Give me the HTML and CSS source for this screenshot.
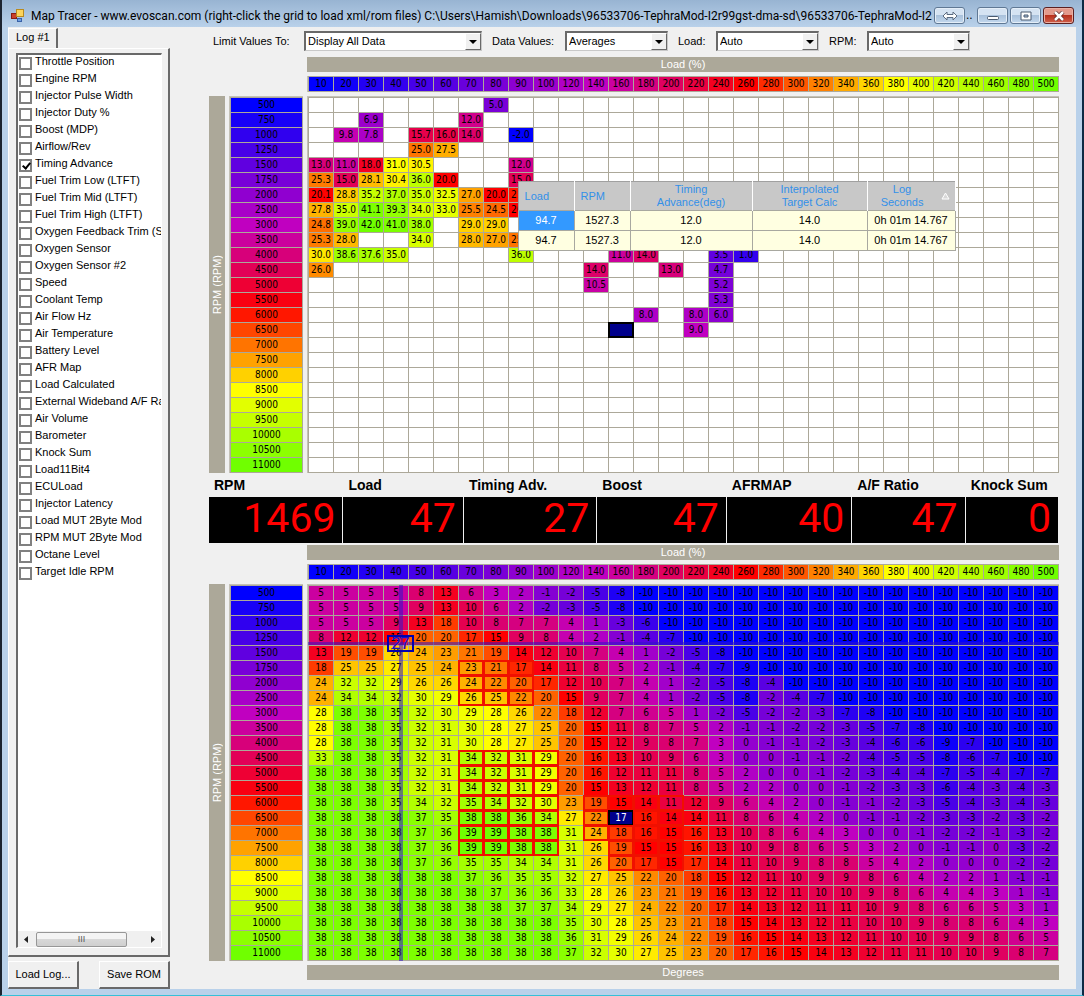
FILE: index.html
```html
<!DOCTYPE html>
<html lang="en">

<head>
    <meta charset="UTF-8">
    <meta name="viewport" content="width=device-width, initial-scale=1.0">
    <title>Map Tracer</title>
    <link rel="stylesheet" href="styles.css">
</head>

<body>
    <header class="titlebar">
        <svg class="app-icon" width="14" height="13" viewBox="0 0 14 13">
            <rect x="0.5" y="4.5" width="5" height="5" fill="#c8402c" stroke="#8a1c14"/>
            <rect x="5.5" y="0.5" width="7" height="7" fill="#fbd45c" stroke="#b98a1e"/>
            <rect x="6.5" y="9.5" width="4" height="3" fill="#6fa0e0" stroke="#3a62a8"/>
        </svg>
        <h1>Map Tracer - www.evoscan.com (right-click the grid to load xml/rom files) C:\Users\Hamish\Downloads\96533706-TephraMod-I2r99gst-dma-sd\96533706-TephraMod-I2r9</h1>
        <button class="win-btn" aria-label="Move">
            <svg width="16" height="10" viewBox="0 0 16 10"><path d="M1 5 L5 1 V3.500 H11 V1 L15 5 L11 9 V6.500 H5 V9 Z" fill="#fff" stroke="#5b6b80"/></svg>
        </button>
        <span class="dots">..</span>
        <button class="win-btn" aria-label="Minimize">
            <svg width="12" height="10" viewBox="0 0 12 10"><rect x="0.5" y="5.500" width="11" height="3" rx="1" fill="#fff" stroke="#4b5b70"/></svg>
        </button>
        <button class="win-btn" aria-label="Maximize">
            <svg width="12" height="10" viewBox="0 0 12 10"><path d="M1 1 H11 V9 H1 Z M4 4 V6 H8 V4 Z" fill="#fff" fill-rule="evenodd" stroke="#4b5b70"/></svg>
        </button>
        <button class="win-btn close" aria-label="Close">
            <svg width="12" height="10" viewBox="0 0 12 10"><path d="M2 1 L10 9 M10 1 L2 9" stroke="#5a2a2a" stroke-width="4"/><path d="M2 1 L10 9 M10 1 L2 9" stroke="#fff" stroke-width="2.500"/></svg>
        </button>
    </header>

    <div class="client">
        <aside class="sidebar">
            <div class="tab">Log #1</div>
            <div class="tab-page">
                <div class="listbox">
                    <ul id="channels"></ul>
                    <div class="scrollbar">
                        <svg width="5" height="7" viewBox="0 0 5 7"><path d="M4 0 V7 L0 3.500 Z" fill="#222"/></svg>
                        <div class="track"><div class="thumb">III</div></div>
                        <svg width="5" height="7" viewBox="0 0 5 7"><path d="M1 0 V7 L5 3.500 Z" fill="#222"/></svg>
                    </div>
                </div>
            </div>
            <div class="side-buttons">
                <button class="push">Load Log...</button>
                <button class="push">Save ROM</button>
            </div>
        </aside>

        <main>
            <form class="toolbar">
                <label class="first" for="limit">Limit Values To:</label>
                <span class="combo wide"><select id="limit"><option>Display All Data</option></select><i></i></span>
                <label class="values" for="values">Data Values:</label>
                <span class="combo"><select id="values"><option>Averages</option></select><i></i></span>
                <label for="load">Load:</label>
                <span class="combo"><select id="load"><option>Auto</option></select><i></i></span>
                <label for="rpm">RPM:</label>
                <span class="combo"><select id="rpm"><option>Auto</option></select><i></i></span>
            </form>

            <section class="map">
                <div class="bar x-title">Load (%)</div>
                <table class="grid x-axis"></table>
                <div class="bar y-title"><span>RPM (RPM)</span></div>
                <table class="grid y-axis"></table>
                <div class="plot">
                    <table class="grid" id="logGrid"></table>
                    <table class="popup">
                        <thead>
                            <tr>
                                <th class="c-load left">Load</th>
                                <th class="c-rpm left">RPM</th>
                                <th class="c-timing">Timing<br>Advance(deg)</th>
                                <th class="c-target">Interpolated<br>Target Calc</th>
                                <th class="c-log"><span>Log<br>Seconds</span>
                                    <svg width="9" height="8" viewBox="0 0 9 8"><path d="M4.500 1 L8 7 H1 Z" fill="#d8d8d8" stroke="#fff"/></svg>
                                </th>
                            </tr>
                        </thead>
                        <tbody>
                            <tr><td class="active">94.7</td><td>1527.3</td><td>12.0</td><td>14.0</td><td>0h 01m 14.767</td></tr>
                            <tr><td>94.7</td><td>1527.3</td><td>12.0</td><td>14.0</td><td>0h 01m 14.767</td></tr>
                        </tbody>
                    </table>
                </div>
            </section>

            <dl class="gauges">
                <div><dt>RPM</dt><dd>1469</dd></div>
                <div><dt>Load</dt><dd>47</dd></div>
                <div><dt>Timing Adv.</dt><dd>27</dd></div>
                <div><dt>Boost</dt><dd>47</dd></div>
                <div><dt>AFRMAP</dt><dd>40</dd></div>
                <div><dt>A/F Ratio</dt><dd>47</dd></div>
                <div><dt>Knock Sum</dt><dd>0</dd></div>
            </dl>

            <section class="map">
                <div class="bar x-title">Load (%)</div>
                <table class="grid x-axis"></table>
                <div class="bar y-title"><span>RPM (RPM)</span></div>
                <table class="grid y-axis"></table>
                <div class="plot">
                    <table class="grid" id="romGrid"></table>
                    <div class="cross-v"></div>
                    <div class="cross-h"></div>
                    <div class="cross-tag">27</div>
                </div>
                <div class="bar x-title">Degrees</div>
            </section>
        </main>
    </div>

    <script src="script.js"></script>
</body>

</html>
```

FILE: styles.css
```css
:root {
    --face: #f0f0f0;
    --bar: #aca899;
    --frame: #b9d1ea;
    --ui: "Liberation Sans", Arial, sans-serif;
}

* {
    box-sizing: border-box;
}

body {
    margin: 0;
    min-height: 100vh;
    display: flex;
    flex-direction: column;
    background: var(--frame);
    border-left: 2px solid #1c2430;
    border-right: 2px solid #0c2a44;
    border-bottom: 1px solid #35c0d8;
    font: 11px/13px var(--ui);
    color: #000;
}

button,
select {
    font: inherit;
    color: inherit;
}

/* title bar */
.titlebar {
    display: flex;
    align-items: center;
    height: 27px;
    padding: 4px 8px 0 9px;
    background: linear-gradient(#98b4d2, #b9d1ea);
}

.app-icon {
    flex: none;
    margin-right: 6px;
}

.titlebar h1 {
    flex: 1;
    min-width: 0;
    margin: 0;
    overflow: hidden;
    white-space: nowrap;
    font: 12px/16px Roboto, "Noto Sans", sans-serif;
}

.win-btn {
    flex: none;
    display: flex;
    align-items: center;
    justify-content: center;
    width: 31px;
    height: 17px;
    margin-left: 2px;
    padding: 0;
    border: 1px solid #5f7894;
    border-radius: 3px;
    background: linear-gradient(#d5e3f2 0 48%, #a9c1db 50%, #c3d8ee);
    box-shadow: inset 0 0 0 1px #e4eef8;
}

.win-btn.close {
    border-color: #5c2020;
    background: linear-gradient(#e39a8c 0 48%, #b8301c 50%, #d0604c);
    box-shadow: inset 0 0 0 1px #eab0a4;
}

.dots {
    width: 10px;
    padding-left: 1px;
    font-size: 12px;
}

.client {
    flex: 1;
    display: flex;
    gap: 39px;
    margin: 0 6px 6px;
    padding: 1px 17px 0 0;
    background: var(--face);
}

/* left side */
.sidebar {
    flex: none;
    width: 162px;
    display: flex;
    flex-direction: column;
}

.tab {
    position: relative;
    z-index: 1;
    width: 50px;
    height: 20px;
    padding: 2px 0 0 7px;
    background: var(--face);
    border-top: 1px solid #fff;
    border-left: 1px solid #fff;
    border-right: 2px solid #696969;
    white-space: nowrap;
}

.tab-page {
    flex: 1;
    display: flex;
    padding: 4px 6px 7px 7px;
    border: 1px solid #fff;
    border-right: 2px solid #696969;
    border-bottom: 2px solid #696969;
}

.listbox {
    flex: 1;
    min-width: 0;
    display: flex;
    flex-direction: column;
    justify-content: space-between;
    background: #fff;
    border: 1px solid #fff;
    border-top: 2px solid #696969;
    border-left: 2px solid #696969;
}

.listbox ul {
    margin: 0;
    padding: 0;
    list-style: none;
    overflow: hidden;
}

.listbox label {
    display: flex;
    align-items: flex-start;
    height: 17px;
    padding-left: 1px;
    white-space: nowrap;
}

.listbox input {
    appearance: none;
    flex: none;
    position: relative;
    width: 13px;
    height: 13px;
    margin: 2px 3px 0 0;
    border: 2px solid #808080;
    background: #fff;
}

.listbox input:checked::after {
    content: "";
    position: absolute;
    left: 3px;
    top: 0;
    width: 3px;
    height: 6px;
    border: solid #000;
    border-width: 0 2px 2px 0;
    transform: rotate(40deg);
}

.scrollbar {
    display: flex;
    align-items: center;
    height: 16px;
    padding: 0 6px;
    background: var(--face);
}

.track {
    flex: 1;
    margin: 0 7px;
}

.thumb {
    width: 85%;
    height: 15px;
    border: 1px solid #979797;
    border-radius: 2px;
    background: linear-gradient(#f4f4f4 0 48%, #d8d8d8 50%, #cfcfcf);
    text-align: center;
    font-size: 9px;
    line-height: 12px;
    color: #555;
}

.side-buttons {
    display: flex;
    justify-content: space-between;
    margin-top: 4px;
}

.push {
    height: 28px;
    width: 71px;
    padding: 0;
    border: 1px solid #fff;
    border-right: 2px solid #696969;
    border-bottom: 2px solid #696969;
    background: var(--face);
    white-space: nowrap;
}

/* toolbar */
main {
    flex: 1;
    min-width: 0;
}

.toolbar {
    display: flex;
    align-items: center;
    gap: 10px;
    padding: 3px 0 6px 4px;
    white-space: nowrap;
}

.toolbar label {
    width: 28px;
}

.toolbar .first {
    width: 81px;
}

.toolbar .values {
    width: 63px;
}

.combo {
    position: relative;
    width: 103px;
    height: 20px;
}

.combo.wide {
    width: 178px;
}

.combo select {
    appearance: none;
    width: 100%;
    height: 20px;
    padding: 0 18px 0 2px;
    border: 2px solid #696969;
    border-right: 1px solid #c8c8c8;
    border-bottom: 1px solid #c8c8c8;
    border-radius: 0;
    background: #fff;
}

.combo i {
    position: absolute;
    top: 2px;
    right: 1px;
    width: 16px;
    height: 17px;
    background: var(--face);
    border: 1px solid #fff;
    border-right-color: #696969;
    border-bottom-color: #696969;
    pointer-events: none;
}

.combo i::after {
    content: "";
    position: absolute;
    left: 3px;
    top: 6px;
    border: 4px solid transparent;
    border-top-color: #000;
    border-bottom: 0;
}

/* maps */
.map {
    display: grid;
    grid-template-columns: 16px 74px minmax(0, 1fr);
    gap: 4px;
}

.bar {
    background: var(--bar);
    color: #fff;
    text-align: center;
}

.x-title {
    grid-column: 3;
    height: 15px;
    line-height: 15px;
}

.x-axis {
    grid-column: 3;
}

.y-title {
    display: flex;
    align-items: center;
    justify-content: center;
}

.y-title span {
    writing-mode: vertical-rl;
    transform: rotate(180deg);
}

.plot {
    position: relative;
}

.grid {
    width: 100%;
    table-layout: fixed;
    border-collapse: separate;
    border-spacing: 1px;
    border-left: 1px solid #c4c1b6;
    background: var(--bar);
    font: 10px/14px "DejaVu Sans Condensed", "DejaVu Sans", sans-serif;
    text-align: center;
}

.grid td,
.grid th {
    height: 14px;
    padding: 0;
    background: #fff;
    font-weight: normal;
    white-space: nowrap;
}

.plot .grid,
.y-axis {
    border-top: 1px solid #c4c1b6;
}

.grid .marked {
    outline: 2px solid #f01000;
    outline-offset: -1px;
}

.grid .selected {
    background: #00008b;
    color: #fff;
    outline: 2px solid #000;
    outline-offset: -1px;
}

/* log entries under the pointer */
.popup {
    position: absolute;
    left: 28%;
    top: 85px;
    width: 438px;
    table-layout: fixed;
    border-collapse: collapse;
    border: 1px solid #a0a0a0;
    background: #ffffe1;
    text-align: center;
}

.popup th {
    position: relative;
    height: 29px;
    padding: 0;
    background: #c8c8c8;
    border-right: 1px solid #fff;
    color: #3390e8;
    font-weight: normal;
}

.popup .left {
    padding-left: 6px;
    text-align: left;
}

.popup td {
    height: 20px;
    padding: 0;
    border: 1px solid #a8a8a0;
}

.popup .active {
    background: #3399ff;
    color: #fff;
}

.c-load,
.c-rpm {
    width: 56px;
}

.c-timing {
    width: 122px;
}

.c-target {
    width: 115px;
}

.c-log span {
    display: block;
    padding-right: 18px;
}

.c-log svg {
    position: absolute;
    right: 5px;
    top: 10px;
}

/* gauges */
.gauges {
    display: grid;
    grid-template-columns: 133fr 119fr 132fr 128fr 124fr 112fr 92fr;
    gap: 1px;
    margin: 0 1px 2px 0;
}

.gauges dt {
    height: 24px;
    padding: 5px 0 0 5px;
    font-size: 14px;
    font-weight: bold;
    line-height: 15px;
    white-space: nowrap;
}

.gauges dd {
    height: 46px;
    margin: 0;
    padding-right: 7px;
    background: #000;
    color: #f00;
    font: 41px/42px Roboto, "Liberation Sans", sans-serif;
    text-align: right;
}

/* live position on the rom map */
.cross-v,
.cross-h {
    position: absolute;
    background: rgba(50, 20, 200, 0.55);
}

.cross-v {
    left: 92px;
    top: 1px;
    bottom: 0;
    width: 4px;
}

.cross-h {
    left: 1px;
    right: 0;
    top: 58px;
    height: 3px;
}

.cross-tag {
    position: absolute;
    left: 80px;
    top: 51px;
    width: 27px;
    height: 17px;
    border: 2px solid #0000b0;
    color: #1010d0;
    font-size: 16px;
    line-height: 14px;
    text-align: center;
    text-shadow: 1px 0 #f04060;
}
```

FILE: script.js
```js
const channels = [
    'Throttle Position', 'Engine RPM', 'Injector Pulse Width', 'Injector Duty %', 'Boost (MDP)',
    'Airflow/Rev', 'Timing Advance', 'Fuel Trim Low (LTFT)', 'Fuel Trim Mid (LTFT)',
    'Fuel Trim High (LTFT)', 'Oxygen Feedback Trim (ST', 'Oxygen Sensor', 'Oxygen Sensor #2',
    'Speed', 'Coolant Temp', 'Air Flow Hz', 'Air Temperature', 'Battery Level', 'AFR Map',
    'Load Calculated', 'External Wideband A/F Ra', 'Air Volume', 'Barometer', 'Knock Sum',
    'Load11Bit4', 'ECULoad', 'Injector Latency', 'Load MUT 2Byte Mod', 'RPM MUT 2Byte Mod',
    'Octane Level', 'Target Idle RPM'
];

const loads = [10, 20, 30, 40, 50, 60, 70, 80, 90, 100];
for (let v = 120; v <= 500; v += 20) loads.push(v);

const rpms = [500, 750, 1000, 1250, 1500, 1750, 2000];
for (let v = 2500; v <= 11000; v += 500) rpms.push(v);

// logged averages: rpm -> { column: value }
const logData = {
    500: { 7: 5 },
    750: { 2: 6.9, 6: 12 },
    1000: { 1: 9.8, 2: 7.8, 4: 15.7, 5: 16, 6: 14, 8: -2 },
    1250: { 4: 25, 5: 27.5 },
    1500: { 0: 13, 1: 11, 2: 18, 3: 31, 4: 30.5, 8: 12 },
    1750: { 0: 25.3, 1: 15, 2: 28.1, 3: 30.4, 4: 36, 5: 20, 8: 15 },
    2000: { 0: 20.1, 1: 28.8, 2: 35.2, 3: 37, 4: 35, 5: 32.5, 6: 27, 7: 20, 8: 21 },
    2500: { 0: 27.8, 1: 35, 2: 41.1, 3: 39.3, 4: 34, 5: 33, 6: 25.5, 7: 24.5, 8: 20 },
    3000: { 0: 24.8, 1: 39, 2: 42, 3: 41, 4: 38, 6: 29, 7: 29 },
    3500: { 0: 25.3, 1: 28, 4: 34, 6: 28, 7: 27, 8: 25 },
    4000: { 0: 30, 1: 38.6, 2: 37.6, 3: 35, 8: 36, 12: 11, 13: 14, 16: 3.5, 17: 1 },
    4500: { 0: 26, 11: 14, 14: 13, 16: 4.7 },
    5000: { 11: 10.5, 16: 5.2 },
    5500: { 16: 5.3 },
    6000: { 13: 8, 15: 8, 16: 6 },
    6500: { 15: 9 }
};

// rom table, short rows are filled up with -10
const romData = `
5 5 5 5 8 13 6 3 2 -1 -2 -5 -8
5 5 5 5 9 13 10 6 2 -2 -3 -5 -8
5 5 5 9 13 18 10 8 7 7 4 1 -3 -6
8 12 12 15 20 20 17 15 9 8 4 2 -1 -4 -7
13 19 19 26 24 23 21 19 14 12 10 7 4 1 -2 -5 -8
18 25 25 27 25 24 23 21 17 14 11 8 5 2 -1 -4 -7 -9
24 32 32 29 26 26 24 22 20 17 12 10 7 4 1 -2 -5 -8 -4
24 34 34 32 30 29 26 25 22 20 15 9 7 4 1 -2 -5 -8 -2 -4 -7
28 38 38 35 32 30 29 28 26 22 18 12 7 6 5 1 -2 -5 -2 -2 -3 -7 -8
28 38 38 35 32 31 30 28 27 25 20 15 11 8 7 5 2 -1 -1 -2 -2 -3 -5 -7 -8
28 38 38 35 32 31 30 28 27 25 20 15 12 9 8 7 3 0 -1 -1 -2 -3 -4 -6 -6 -9 -7
33 38 38 35 32 31 34 32 31 29 20 16 13 10 9 6 3 0 0 -1 -1 -2 -4 -5 -5 -8 -6 -7
38 38 38 35 32 31 34 32 31 29 20 16 12 11 11 8 5 2 0 0 -1 -2 -3 -4 -4 -7 -5 -4 -7 -7
38 38 38 35 32 31 34 32 31 29 20 15 13 12 11 8 5 2 2 0 0 -1 -2 -3 -3 -6 -4 -3 -4 -3
38 38 38 35 34 32 35 34 32 30 23 19 15 14 11 12 9 6 4 2 0 -1 -1 -2 -3 -5 -4 -3 -4 -3
38 38 38 38 37 35 38 38 36 34 27 22 17 16 14 14 11 8 6 4 2 0 -1 -1 -2 -3 -3 -2 -3 -2
38 38 38 38 37 36 39 39 38 38 31 24 18 16 15 16 13 10 8 6 4 3 0 0 -1 -2 -2 -1 -3 -2
38 38 38 38 37 36 39 39 38 38 31 26 19 15 15 16 13 10 9 8 6 5 3 2 0 -1 -1 0 -3 -2
38 38 38 38 37 36 35 35 34 34 31 26 20 17 15 17 14 11 10 9 8 8 5 4 2 0 0 0 -2 -2
38 38 38 38 38 38 37 36 35 35 32 27 25 22 20 18 15 12 11 10 9 9 8 6 4 2 2 1 -1 -1
38 38 38 38 38 38 38 37 36 36 33 28 26 23 21 19 16 13 12 11 10 10 9 8 6 4 4 3 1 -1
38 38 38 38 38 38 38 38 37 37 34 29 27 24 22 20 17 14 13 12 11 11 10 9 8 6 6 5 3 1
38 38 38 38 38 38 38 38 38 38 35 30 28 25 23 21 18 15 14 13 12 11 10 10 9 8 8 6 4 3
38 38 38 38 38 38 38 38 38 38 36 31 29 26 24 22 19 16 15 14 13 12 11 10 10 9 9 8 6 5
38 38 38 38 38 38 38 38 38 38 37 32 30 27 25 23 20 17 16 15 14 13 12 11 11 10 10 9 8 7
`.trim().split('\n').map(line => line.split(' ').map(Number));

// blocks of cells with a red frame: [first row, last row, first column, last column]
const marked = [[5, 7, 6, 8], [11, 17, 6, 9], [14, 16, 11, 11], [14, 18, 12, 14]];

const ramp = [[0, 0, 255], [192, 0, 192], [255, 0, 0], [255, 255, 0], [112, 255, 0]];

// stops are the values where each ramp colour is reached
function heat(value, stops) {
    let i = 0;
    while (i < 3 && value > stops[i + 1]) i++;
    const t = Math.min(1, Math.max(0, (value - stops[i]) / (stops[i + 1] - stops[i])));
    const rgb = ramp[i].map((c, n) => Math.round(c + (ramp[i + 1][n] - c) * t));
    return `rgb(${rgb.join(',')})`;
}

function cell(tag, text, color, className) {
    const el = document.createElement(tag);
    el.textContent = text;
    if (color) el.style.backgroundColor = color;
    if (className) el.className = className;
    return el;
}

const list = document.getElementById('channels');
channels.forEach(name => {
    const li = document.createElement('li');
    li.innerHTML = `<label><input type="checkbox"${name === 'Timing Advance' ? ' checked' : ''}>${name}</label>`;
    list.appendChild(li);
});

document.querySelectorAll('.x-axis').forEach(table => {
    const tr = table.insertRow();
    loads.forEach((v, i) => tr.appendChild(cell('th', v, heat(i, [0, 11, 17, 23, 29]))));
});

document.querySelectorAll('.y-axis').forEach(table => {
    rpms.forEach((v, i) => table.insertRow().appendChild(cell('th', v, heat(i, [0, 8, 13.5, 19, 24]))));
});

const logGrid = document.getElementById('logGrid');
const romGrid = document.getElementById('romGrid');
rpms.forEach((rpm, r) => {
    const logRow = logGrid.insertRow();
    const romRow = romGrid.insertRow();
    loads.forEach((load, c) => {
        const selected = rpm === 6500 && load === 160;

        const v = (logData[rpm] || {})[c];
        if (selected) logRow.appendChild(cell('td', '', null, 'selected'));
        else if (v === undefined) logRow.appendChild(cell('td', ''));
        else logRow.appendChild(cell('td', v.toFixed(1), heat(v, [-2, 9, 20, 31, 42])));

        const deg = c < romData[r].length ? romData[r][c] : -10;
        const isMarked = marked.some(m => r >= m[0] && r <= m[1] && c >= m[2] && c <= m[3]);
        if (selected) romRow.appendChild(cell('td', deg, null, 'selected'));
        else romRow.appendChild(cell('td', deg, heat(deg, [-10, 3, 15, 28, 39]), isMarked ? 'marked' : ''));
    });
});
```
